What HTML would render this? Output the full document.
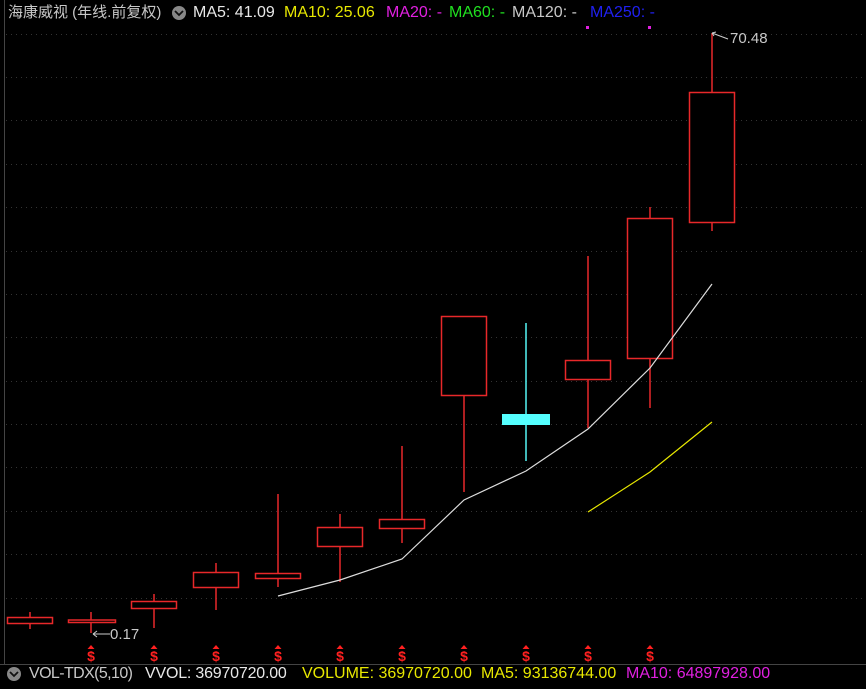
<!DOCTYPE html>
<html><head><meta charset="utf-8"><style>
html,body{margin:0;padding:0;background:#000;width:866px;height:689px;overflow:hidden}
body{position:relative;font-family:"Liberation Sans","Noto Sans CJK SC",sans-serif;font-size:16px}
.t{position:absolute;white-space:nowrap;line-height:18px}
</style></head><body>
<svg width="866" height="689" style="position:absolute;left:0;top:0" xmlns="http://www.w3.org/2000/svg">
<line x1="4.5" y1="0" x2="4.5" y2="664" stroke="#444"/>
<line x1="0" y1="664.5" x2="866" y2="664.5" stroke="#444"/>
<g stroke="#333" stroke-dasharray="1,4">
<line x1="6" y1="34.5" x2="866" y2="34.5"/>
<line x1="6" y1="77.5" x2="866" y2="77.5"/>
<line x1="6" y1="120.5" x2="866" y2="120.5"/>
<line x1="6" y1="164.5" x2="866" y2="164.5"/>
<line x1="6" y1="207.5" x2="866" y2="207.5"/>
<line x1="6" y1="251.5" x2="866" y2="251.5"/>
<line x1="6" y1="294.5" x2="866" y2="294.5"/>
<line x1="6" y1="337.5" x2="866" y2="337.5"/>
<line x1="6" y1="381.5" x2="866" y2="381.5"/>
<line x1="6" y1="424.5" x2="866" y2="424.5"/>
<line x1="6" y1="467.5" x2="866" y2="467.5"/>
<line x1="6" y1="511.5" x2="866" y2="511.5"/>
<line x1="6" y1="554.5" x2="866" y2="554.5"/>
<line x1="6" y1="598.5" x2="866" y2="598.5"/>
</g>
<g stroke="#e8282a" stroke-width="1.5" fill="#000">
<line x1="30" y1="612" x2="30" y2="629"/><rect x="7.5" y="617.5" width="45" height="6"/>
<line x1="91" y1="612" x2="91" y2="633"/><rect x="68.5" y="620" width="47" height="2.5"/>
<line x1="154" y1="594" x2="154" y2="628"/><rect x="131.5" y="601.5" width="45" height="7"/>
<line x1="216" y1="563" x2="216" y2="610"/><rect x="193.5" y="572.5" width="45" height="15"/>
<line x1="278" y1="494" x2="278" y2="587"/><rect x="255.5" y="573.5" width="45" height="5"/>
<line x1="340" y1="514" x2="340" y2="582"/><rect x="317.5" y="527.5" width="45" height="19"/>
<line x1="402" y1="446" x2="402" y2="543"/><rect x="379.5" y="519.5" width="45" height="9"/>
<line x1="464" y1="316" x2="464" y2="492"/><rect x="441.5" y="316.5" width="45" height="79"/>
<line x1="588" y1="256" x2="588" y2="428"/><rect x="565.5" y="360.5" width="45" height="19"/>
<line x1="650" y1="207" x2="650" y2="408"/><rect x="627.5" y="218.5" width="45" height="140"/>
<line x1="712" y1="33" x2="712" y2="231"/><rect x="689.5" y="92.5" width="45" height="130"/>
</g>
<line x1="526" y1="323" x2="526" y2="461" stroke="#55f5f5" stroke-width="1.5"/>
<rect x="502" y="414" width="48" height="11" fill="#55ffff"/>
<polyline points="278,596 340,580 402,559 464,500 526,471 588,429 650,368 712,284" fill="none" stroke="#ddd" stroke-width="1.2"/>
<polyline points="588,512 650,472 712,422" fill="none" stroke="#e8e800" stroke-width="1.2"/>
<rect x="586" y="26" width="3" height="3" fill="#e020e0"/>
<rect x="648" y="26" width="3" height="3" fill="#e020e0"/>
<g stroke="#ccc" fill="none" stroke-width="1">
<path d="M93 634 H110 M93 634 l4 -3 M93 634 l4 3"/>
<path d="M712 33 L728 39 M712 33 l4 -1 M712 33 l2 3"/>
</g>
<circle cx="179" cy="13" r="7" fill="#888"/>
<path d="M175 11 l4 4 l4 -4" stroke="#111" stroke-width="1.8" fill="none"/>
<circle cx="14" cy="674" r="7" fill="#888"/>
<path d="M10 672 l4 4 l4 -4" stroke="#111" stroke-width="1.8" fill="none"/>
<g fill="#ff2020" font-family="Liberation Sans,sans-serif" font-size="14" font-weight="bold" text-anchor="middle">
<text x="91" y="661">$</text><text x="154" y="661">$</text><text x="216" y="661">$</text><text x="278" y="661">$</text><text x="340" y="661">$</text><text x="402" y="661">$</text><text x="464" y="661">$</text><text x="526" y="661">$</text><text x="588" y="661">$</text><text x="650" y="661">$</text>
</g>
<g fill="#ff2020">
<path d="M87.5 649 l3.5 -4 l3.5 4z"/><path d="M150.5 649 l3.5 -4 l3.5 4z"/><path d="M212.5 649 l3.5 -4 l3.5 4z"/><path d="M274.5 649 l3.5 -4 l3.5 4z"/><path d="M336.5 649 l3.5 -4 l3.5 4z"/><path d="M398.5 649 l3.5 -4 l3.5 4z"/><path d="M460.5 649 l3.5 -4 l3.5 4z"/><path d="M522.5 649 l3.5 -4 l3.5 4z"/><path d="M584.5 649 l3.5 -4 l3.5 4z"/><path d="M646.5 649 l3.5 -4 l3.5 4z"/>
</g>
</svg>
<div class="t" style="left:8px;top:4px;color:#c8c8c8;font-size:15px">海康威视 (年线.前复权)</div>
<div class="t" style="left:193px;top:4px;color:#e8e8e8">MA5: 41.09</div>
<div class="t" style="left:284px;top:4px;color:#e8e800">MA10: 25.06</div>
<div class="t" style="left:386px;top:4px;color:#e020e0">MA20: -</div>
<div class="t" style="left:449px;top:4px;color:#20e020">MA60: -</div>
<div class="t" style="left:512px;top:4px;color:#c8c8c8">MA120: -</div>
<div class="t" style="left:590px;top:4px;color:#2020f0">MA250: -</div>
<div class="t" style="left:110px;top:626px;color:#c8c8c8;font-size:15px">0.17</div>
<div class="t" style="left:730px;top:30px;color:#c8c8c8;font-size:15px">70.48</div>
<div class="t" style="left:29px;top:665px;color:#c8c8c8;letter-spacing:-0.6px">VOL-TDX(5,10)</div>
<div class="t" style="left:145px;top:665px;color:#e8e8e8;letter-spacing:-0.2px">VVOL: 36970720.00</div>
<div class="t" style="left:302px;top:665px;color:#e8e800">VOLUME: 36970720.00</div>
<div class="t" style="left:481px;top:665px;color:#e8e800">MA5: 93136744.00</div>
<div class="t" style="left:626px;top:665px;color:#e020e0">MA10: 64897928.00</div>
</body></html>
